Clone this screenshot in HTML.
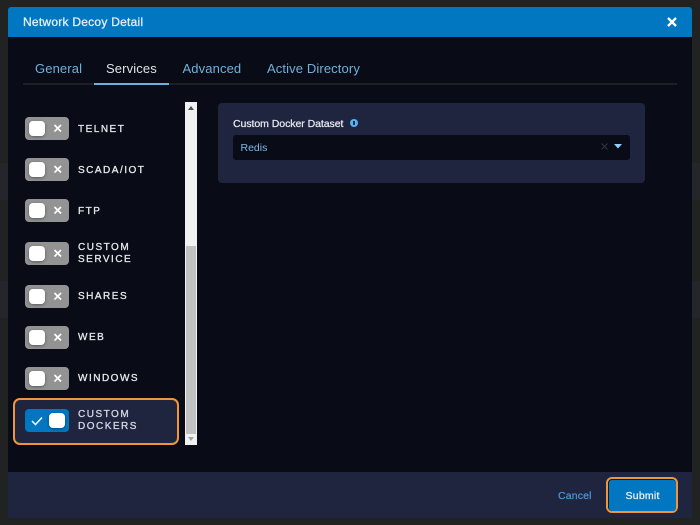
<!DOCTYPE html>
<html><head><meta charset="utf-8"><style>
html,body{margin:0;padding:0;width:700px;height:525px;overflow:hidden;background:#212224;font-family:"Liberation Sans",sans-serif}
div,span{position:absolute;white-space:nowrap}
svg{position:absolute}
.tg{left:25px;width:44px;height:23px;background:#939393;border-radius:4px}
.kn{left:4px;top:3.5px;width:16px;height:15.5px;background:#fff;border-radius:4px;box-shadow:0 1px 3px rgba(0,0,0,.4)}
.lb{left:78px;font-size:10px;letter-spacing:1.5px;color:#e6e8ec;line-height:12px;-webkit-text-stroke:.3px #e6e8ec}
.tab{top:61px;font-size:13px;line-height:16px;color:#6fb1de;letter-spacing:.12px}
</style></head><body>
<div style="left:0;top:0;width:700px;height:525px;background:#212222"></div>
<div style="left:0;top:163px;width:700px;height:37px;background:#25262b"></div>
<div style="left:0;top:281px;width:700px;height:37px;background:#25262b"></div>
<div style="left:8px;top:7px;width:684px;height:511px;background:#090c16;border-radius:3px 3px 0 0;overflow:hidden">
  <div style="left:0;top:0;width:684px;height:30px;background:#0077c0"></div>
  <div style="left:15px;top:8px;font-size:12px;color:#e6eef6;line-height:15px;letter-spacing:.25px;-webkit-text-stroke:.3px #e6eef6">Network Decoy Detail</div>
  <svg style="left:659px;top:10px" width="10" height="10" viewBox="0 0 10 10"><path d="M1 1L9 9M9 1L1 9" stroke="#fff" stroke-width="2.3"/></svg>
  <div style="left:0;top:465px;width:684px;height:46px;background:#20253f"></div>
</div>
<div class="tab" style="left:35px">General</div>
<div class="tab" style="left:106px;color:#dfe3e8">Services</div>
<div class="tab" style="left:182.5px">Advanced</div>
<div class="tab" style="left:267px">Active Directory</div>
<div style="left:23px;top:83px;width:654px;height:2px;background:#1d1f24"></div>
<div style="left:94px;top:83px;width:75px;height:2px;background:#6fb1de"></div>

<div style="left:185px;top:102px;width:12px;height:343px;background:#f1f1f1"></div>
<div style="left:186px;top:246px;width:9.5px;height:188px;background:#c1c1c1"></div>
<svg style="left:188px;top:106px" width="6" height="5"><path d="M0 4H6L3 0Z" fill="#505050"/></svg>
<svg style="left:188px;top:437px" width="6" height="5"><path d="M0 0H6L3 4Z" fill="#a3a3a3"/></svg>

<div class="tg" style="top:117px"><div class="kn"></div></div>
<div class="lb" style="top:124px">TELNET</div>
<div class="tg" style="top:158px"><div class="kn"></div></div>
<div class="lb" style="top:165px">SCADA/IOT</div>
<div class="tg" style="top:199px"><div class="kn"></div></div>
<div class="lb" style="top:206px">FTP</div>
<div class="tg" style="top:242px"><div class="kn"></div></div>
<div class="lb" style="top:242px">CUSTOM</div>
<div class="lb" style="top:254px">SERVICE</div>
<div class="tg" style="top:285px"><div class="kn"></div></div>
<div class="lb" style="top:291px">SHARES</div>
<div class="tg" style="top:326px"><div class="kn"></div></div>
<div class="lb" style="top:332px">WEB</div>
<div class="tg" style="top:367px"><div class="kn"></div></div>
<div class="lb" style="top:373px">WINDOWS</div>
<svg style="left:53px;top:123px" width="10" height="290" viewBox="0 0 10 290">
<g stroke="#fff" stroke-width="1.7" fill="none"><path d="M1.5 2L8 8.5M8 2L1.5 8.5"/><path d="M1.5 43L8 49.5M8 43L1.5 49.5"/><path d="M1.5 84L8 90.5M8 84L1.5 90.5"/><path d="M1.5 127L8 133.5M8 127L1.5 133.5"/><path d="M1.5 170L8 176.5M8 170L1.5 176.5"/><path d="M1.5 211L8 217.5M8 211L1.5 217.5"/><path d="M1.5 252L8 258.5M8 252L1.5 258.5"/></g></svg>

<div style="left:13px;top:398px;width:162px;height:43px;background:#20253f;border:2px solid #f0953a;border-radius:7px"></div>
<div class="tg" style="top:409px;background:#0077c0"><div class="kn" style="left:24px"></div></div>
<svg style="left:31px;top:416px" width="12" height="10" viewBox="0 0 12 10"><path d="M1 5L4.5 8.5L11 1.5" stroke="#fff" stroke-width="1.5" fill="none"/></svg>
<div class="lb" style="top:409px;color:#d5d9e4;-webkit-text-stroke-color:#d5d9e4">CUSTOM</div>
<div class="lb" style="top:421px;color:#d5d9e4;-webkit-text-stroke-color:#d5d9e4">DOCKERS</div>

<div style="left:218px;top:103px;width:427px;height:80px;background:#20253f;border-radius:4px"></div>
<div style="left:233px;top:117.5px;font-size:10.5px;color:#e6e9ee;line-height:13px;letter-spacing:-.05px;-webkit-text-stroke:.25px #e6e9ee">Custom Docker Dataset</div>
<div style="left:349.5px;top:118.5px;width:8.5px;height:8.5px;background:#5ab2ee;border-radius:50%"></div>
<div style="left:353px;top:120.5px;width:1.5px;height:4.5px;background:#14304f"></div>
<div style="left:233px;top:135px;width:397px;height:25px;background:#090c16;border-radius:3px"></div>
<div style="left:240.5px;top:141px;font-size:10.5px;color:#7fb8e6;line-height:14px">Redis</div>
<svg style="left:601px;top:143px" width="7" height="7"><path d="M.5 .5L6.5 6.5M6.5 .5L.5 6.5" stroke="#33353b" stroke-width="1.1"/></svg>
<svg style="left:614px;top:144px" width="9" height="5"><path d="M0 0H8L4 4.5Z" fill="#8fd0fb"/></svg>

<div style="left:558px;top:489.5px;font-size:10.5px;color:#4c93d3;line-height:13px;letter-spacing:.15px;-webkit-text-stroke:.25px #4c93d3">Cancel</div>
<div style="left:606px;top:477px;width:68px;height:32px;border:2px solid #f0953a;border-radius:6px;background:#0c1a33"></div>
<div style="left:609px;top:480px;width:67px;height:30.5px;background:#0077c0;border-radius:3px"></div>
<div style="left:625.5px;top:489.5px;font-size:10.5px;color:#e9f1f8;line-height:13px;letter-spacing:.25px;-webkit-text-stroke:.3px #e9f1f8">Submit</div>
</body></html>
